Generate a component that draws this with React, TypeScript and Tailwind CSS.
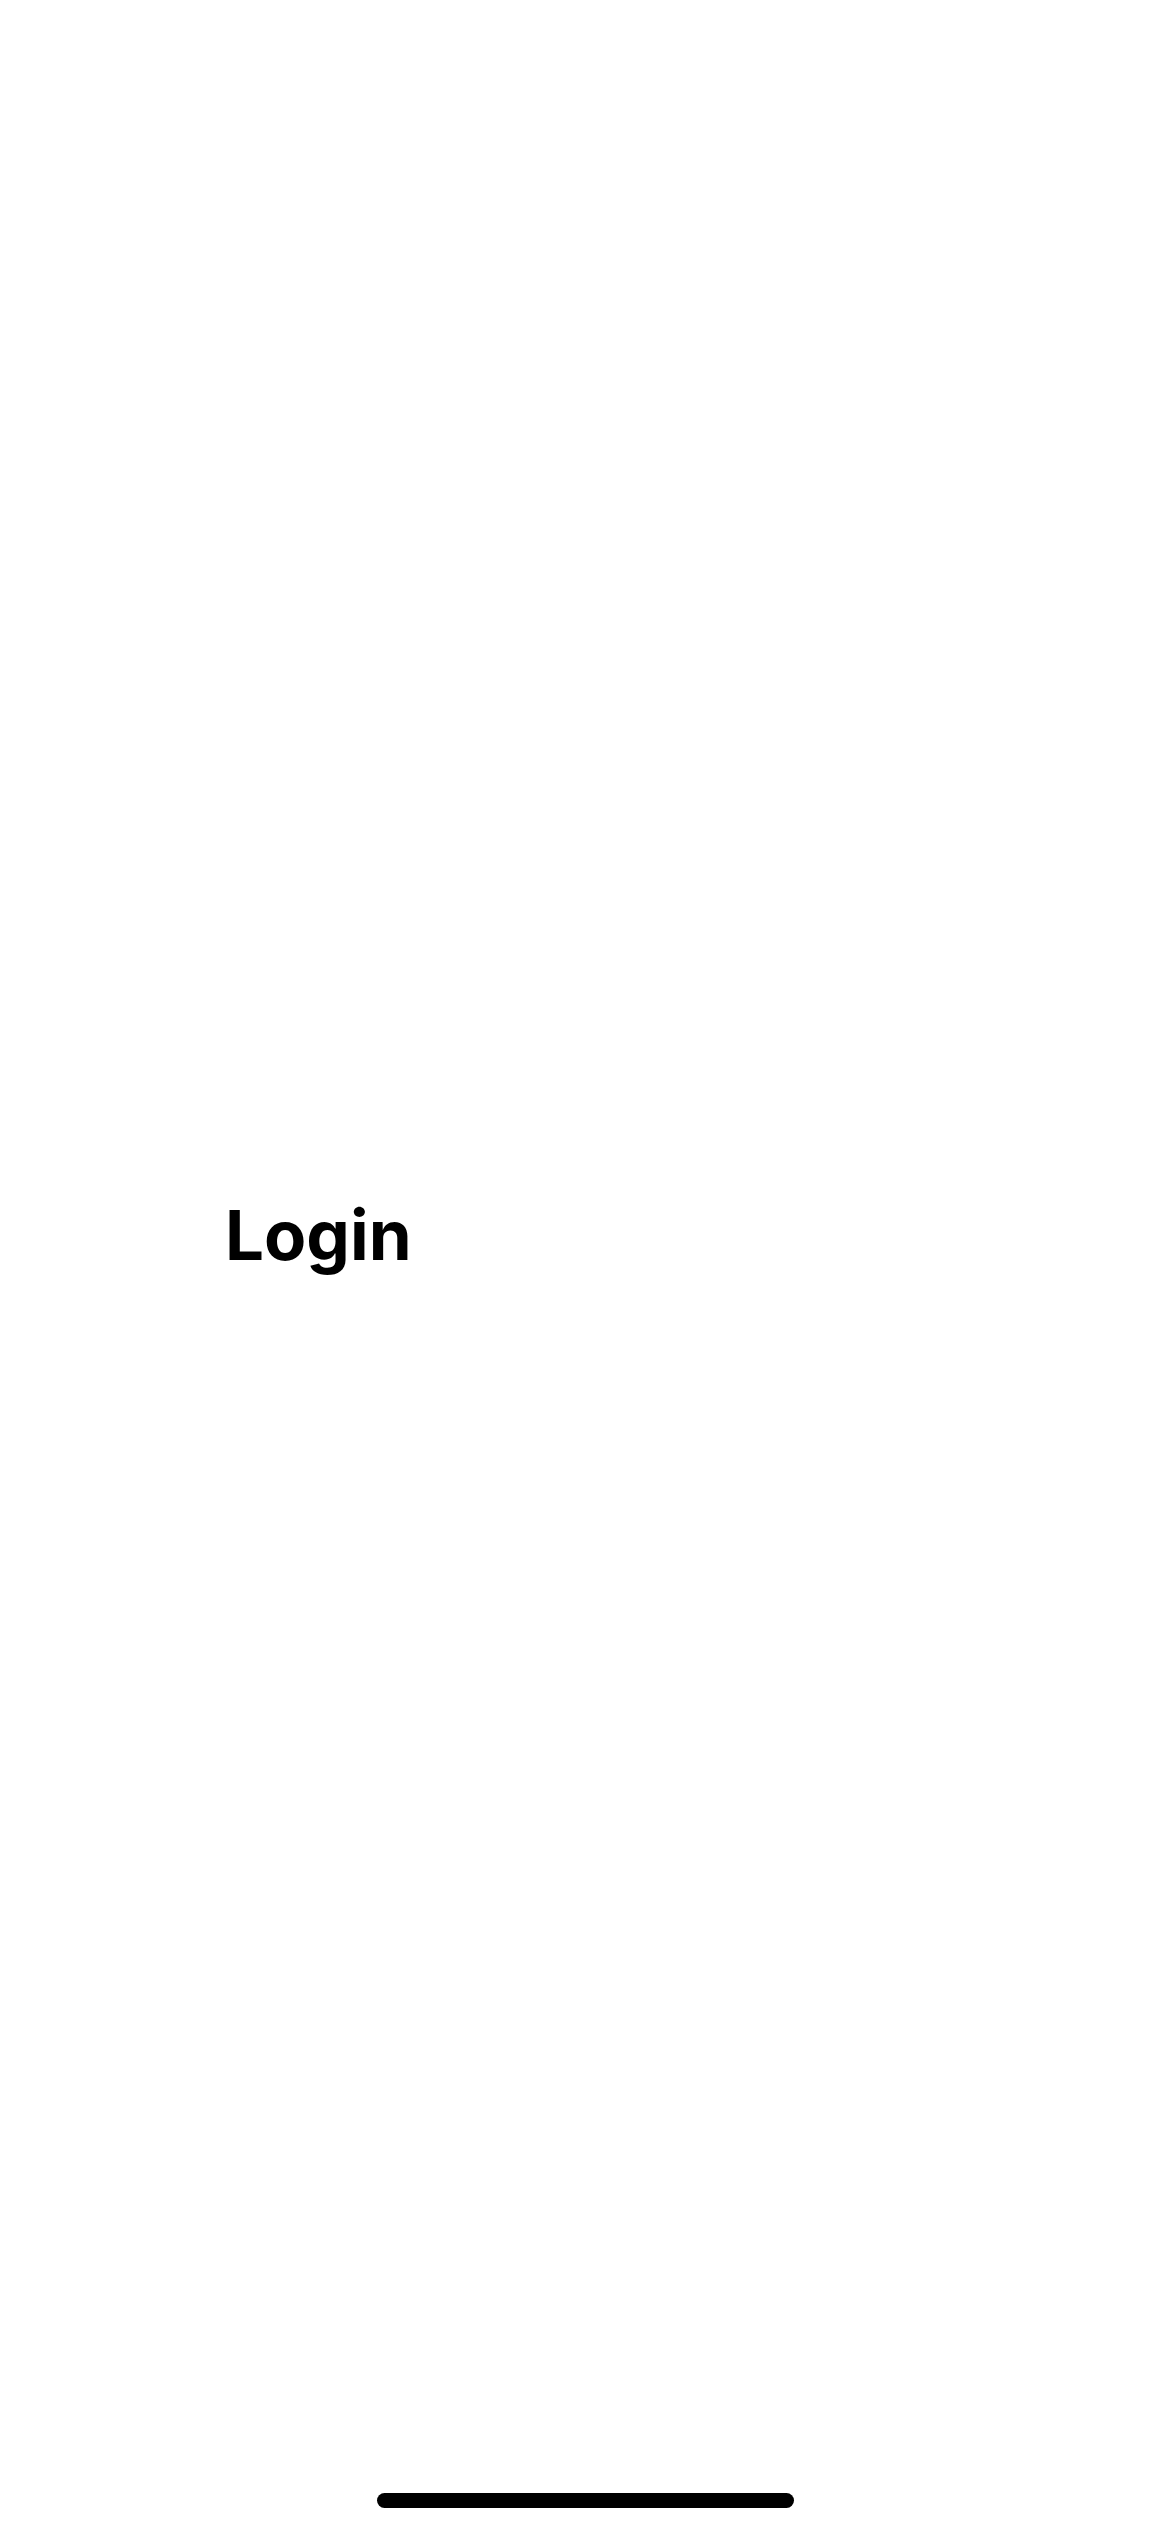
export default function App() {
  return (
    <div
      className="flex h-[2532px] w-full flex-col bg-white"
      style={{ fontFamily: 'Inter, "Noto Sans", sans-serif' }}
    >
      {/* Title */}
      <div className="pl-[225px] pt-[1201px]">
        <h1 className="text-[69px] font-bold leading-none text-black">Login</h1>
      </div>

      <div className="flex-1" />

      {/* Home indicator */}
      <div className="mb-[24px] h-[15px] w-[417px] self-center rounded-full bg-black" />
    </div>
  )
}
